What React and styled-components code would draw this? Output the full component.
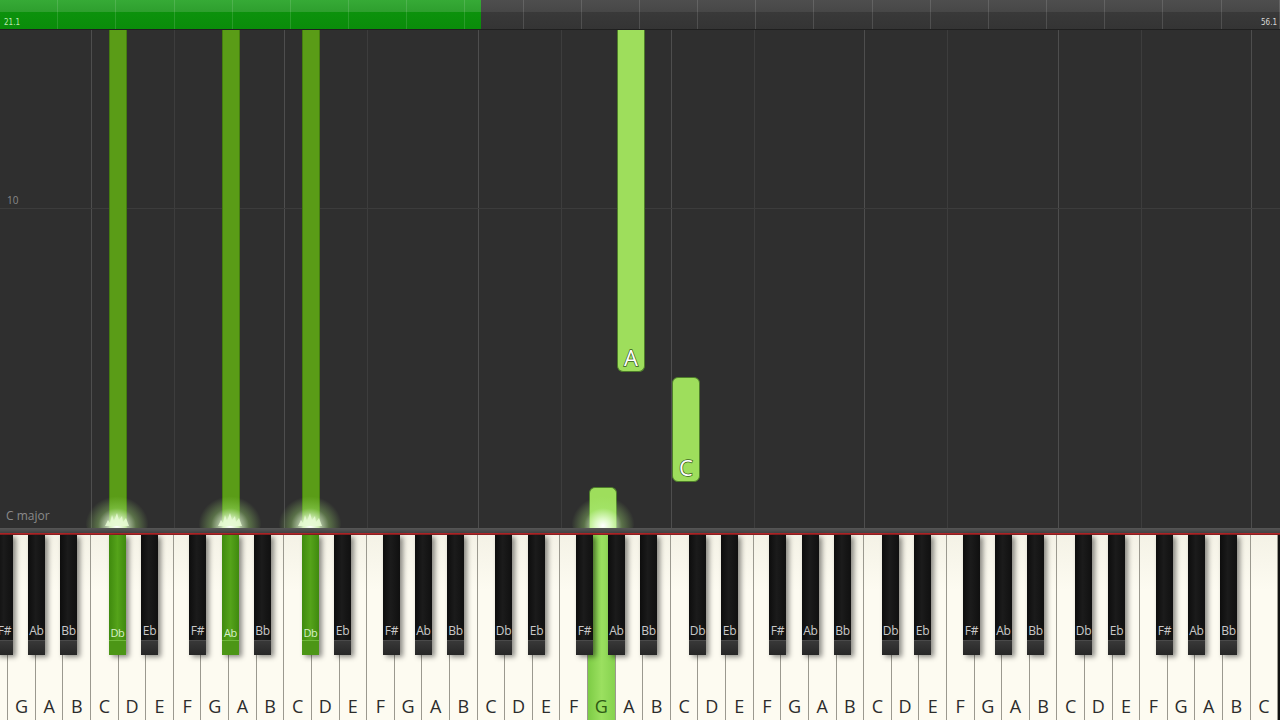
import React from 'react';
import styled, { createGlobalStyle } from 'styled-components';

const W = 27.62; // white key width
const OCT = W * 7;
const FIRST = -19.4; // left edge of the partly hidden F
const WHITE_NAMES = ['F', 'G', 'A', 'B', 'C', 'D', 'E'];
const BLACKS = [
	{ i: 1, name: 'Db' },
	{ i: 3, name: 'Eb' },
	{ i: 6, name: 'F#' },
	{ i: 8, name: 'Ab' },
	{ i: 10, name: 'Bb' },
];
const PROGRESS = 481;

const GlobalStyle = createGlobalStyle`
	html, body {
		margin: 0;
		padding: 0;
		background: #2f2f2f;
		overflow: hidden;
	}
	body {
		font-family: "Open Sans", "Noto Sans", sans-serif;
	}
`;

const Screen = styled.div`
	width: 1280px;
	height: 720px;
	display: flex;
	flex-direction: column;
	overflow: hidden;
	background: #2f2f2f;
`;

const TopBar = styled.div`
	position: relative;
	height: 29px;
	flex: 0 0 29px;
	display: flex;
	border-bottom: 1px solid #1f1f1f;
	background:
		linear-gradient(#36aa36 0, #2e9f2e 12px, #0c920c 12px, #0a8c0a 100%) 0 0 / ${PROGRESS}px 100% no-repeat,
		linear-gradient(#4e4e4e 0, #474747 12px, #393939 12px, #343434 100%);
`;

const Tick = styled.div`
	flex: 0 0 ${1280 / 22}px;
	box-sizing: border-box;
	border-right: 1px solid rgba(255, 255, 255, 0.13);
`;

const BarLabel = styled.span`
	position: absolute;
	bottom: 2px;
	${(p) => (p.right ? 'right: 3px;' : 'left: 4px;')}
	font-family: "DejaVu Sans Condensed", "DejaVu Sans", sans-serif;
	font-size: 8px;
	color: ${(p) => (p.right ? '#d8d8d8' : '#b8e8b0')};
`;

const Roll = styled.div`
	position: relative;
	height: 498px;
	flex: 0 0 498px;
	overflow: hidden;
	background: #2f2f2f;
`;

const Lanes = styled.div`
	display: flex;
	height: 100%;
`;

const Lane = styled.div`
	flex: 0 0 ${(p) => p.w}px;
	box-sizing: border-box;
	border-left: 1px solid ${(p) => (p.edge === 'C' ? '#4e4e4e' : p.edge === 'F' ? '#3d3d3d' : 'transparent')};
`;

const BeatLine = styled.div`
	position: absolute;
	left: 0;
	right: 0;
	top: ${(p) => p.y}px;
	height: 1px;
	background: #3c3c3c;
`;

const RollLabel = styled.span`
	position: absolute;
	left: ${(p) => p.x}px;
	top: ${(p) => p.y}px;
	font-size: ${(p) => p.size}px;
	color: #8a8a8a;
`;

const Note = styled.div`
	position: absolute;
	box-sizing: border-box;
	display: flex;
	align-items: flex-end;
	justify-content: center;
	background: ${(p) => (p.black ? '#5a9c17' : '#9ede5c')};
	border: 1px solid ${(p) => (p.black ? '#447c10' : '#4d7d2a')};
	border-radius: ${(p) => (p.black ? '1px' : '6px')};
	${(p) => p.open && 'border-bottom: none; border-bottom-left-radius: 0; border-bottom-right-radius: 0;'}
	${(p) => p.fromTop && 'border-top: none; border-top-left-radius: 0; border-top-right-radius: 0;'}
`;

const NoteName = styled.span`
	font-family: "Open Sans", "Noto Sans", sans-serif;
	font-size: 22px;
	line-height: 26px;
	color: #ffffff;
	-webkit-text-stroke: 1.4px #3b5e22;
	paint-order: stroke fill;
	margin-bottom: 1px;
`;

const Glow = styled.div`
	position: absolute;
	left: ${(p) => p.x - 32}px;
	top: ${(p) => p.y - 26}px;
	width: 64px;
	height: 48px;
	border-radius: 50%;
	background: radial-gradient(ellipse at 50% 62%, rgba(255, 255, 255, 1) 0, rgba(235, 255, 220, 0.85) 16%, rgba(170, 235, 120, 0.35) 42%, rgba(120, 200, 80, 0) 70%);
	pointer-events: none;
`;

const Spark = styled.svg`
	position: absolute;
	left: ${(p) => p.x - 13}px;
	top: ${(p) => p.y - 14}px;
	overflow: visible;
`;

const Keyboard = styled.div`
	position: relative;
	flex: 1;
	display: flex;
	flex-direction: column;
	overflow: hidden;
`;

const Rail = styled.div`
	height: 5px;
	background: linear-gradient(#565656, #424242);
`;

const RedLine = styled.div`
	height: 2px;
	background: linear-gradient(#c2282b, #7a1d1d);
`;

const Whites = styled.div`
	display: flex;
	flex: 1;
	margin-left: ${FIRST}px;
	background: #111;
`;

const WhiteKey = styled.div`
	flex: 0 0 ${W}px;
	box-sizing: border-box;
	border-right: 1px solid #9b998f;
	display: flex;
	align-items: flex-end;
	justify-content: center;
	padding-bottom: 2px;
	background: ${(p) => (p.on ? 'linear-gradient(90deg, #7dcc45, #9be060 50%, #86d24f)' : 'linear-gradient(#f4f2e6, #fdfbf1 30%, #fdfbf1)')};
	font-size: 18px;
	line-height: 24px;
	color: #2c2c2c;
	${(p) => p.on && 'color: #2e5a14;'}
`;

const BlackKey = styled.div`
	position: absolute;
	top: 7px;
	left: ${(p) => p.x}px;
	width: 17px;
	height: 120px;
	box-sizing: border-box;
	display: flex;
	flex-direction: column;
	justify-content: flex-end;
	background: ${(p) => (p.on ? 'linear-gradient(90deg, #3f8a0e, #55a31a 50%, #3f8a0e)' : 'linear-gradient(90deg, #0d0d0d, #1b1b1b 45%, #101010)')};
	box-shadow: 3px 2px 5px rgba(0, 0, 0, 0.45);
`;

const BlackName = styled.span`
	text-align: center;
	font-size: ${(p) => (p.on ? 11 : 12)}px;
	line-height: 14px;
	color: ${(p) => (p.on ? '#d8efc8' : '#c9c9c9')};
	margin-bottom: ${(p) => (p.on ? 0 : 2)}px;
	letter-spacing: -0.3px;
`;

const Lip = styled.div`
	height: 14px;
	border-top: 1px solid ${(p) => (p.on ? '#6fb83a' : '#4a4a4a')};
	background: ${(p) => (p.on ? '#4c9616' : 'linear-gradient(#383838, #262626)')};
`;

// pieces of the roll
const lanes = (() => {
	const out = [{ w: 91.1, edge: null }];
	let x = 91.1;
	let c = true;
	while (x < 1280) {
		const w = c ? W * 3 : W * 4;
		out.push({ w, edge: c ? 'C' : 'F' });
		x += w;
		c = !c;
	}
	return out;
})();

// the first key (F) is mostly hidden, its name sits off screen
const whites = Array.from({ length: 47 }, (_, k) => ({
	name: k === 0 ? '' : WHITE_NAMES[k % 7],
	on: k === 22,
}));

const blacks = (() => {
	const out = [];
	for (let o = -1; o < 7; o++) {
		const cStart = FIRST + (4 + o * 7) * W;
		BLACKS.forEach((b) => {
			const center = cStart + ((b.i + 0.5) * OCT) / 12 + 2;
			if (center < -20 || center > 1255) return;
			const x = Math.round(center - 8.5);
			const on = (o === 0 && (b.name === 'Db' || b.name === 'Ab')) || (o === 1 && b.name === 'Db');
			out.push({ x, name: b.name, on });
		});
	}
	return out;
})();

const darkNotes = [109, 222, 302];

const Sparkle = ({ x, y }) => (
	<Spark x={x} y={y} width="26" height="14" viewBox="0 0 26 14">
		<path
			d="M1 14 L4 8 L6 11 L8 3 L10 9 L13 1 L15 8 L18 4 L19 10 L22 6 L25 14 Z"
			fill="#e6fad2"
			opacity="0.9"
		/>
	</Spark>
);

export default function App() {
	return (
		<Screen>
			<GlobalStyle />
			<TopBar>
				{Array.from({ length: 22 }, (_, i) => (
					<Tick key={i} />
				))}
				<BarLabel>21.1</BarLabel>
				<BarLabel right>56.1</BarLabel>
			</TopBar>

			<Roll>
				<Lanes>
					{lanes.map((l, i) => (
						<Lane key={i} w={l.w} edge={l.edge} />
					))}
				</Lanes>
				<BeatLine y={178} />
				<RollLabel x={7} y={163} size={10}>10</RollLabel>
				<RollLabel x={6} y={477} size={12}>C major</RollLabel>

				{darkNotes.map((x) => (
					<Note key={x} black open fromTop style={{ left: x, top: 0, width: 18, height: 498 }} />
				))}

				<Note fromTop style={{ left: 617, top: 0, width: 28, height: 342 }}>
					<NoteName>A</NoteName>
				</Note>
				<Note style={{ left: 672, top: 347, width: 28, height: 105 }}>
					<NoteName>C</NoteName>
				</Note>
				<Note open style={{ left: 589, top: 457, width: 28, height: 41 }} />

				{[117, 230, 310].map((x) => (
					<React.Fragment key={x}>
						<Glow x={x} y={492} />
						<Sparkle x={x} y={496} />
					</React.Fragment>
				))}
				<Glow x={603} y={492} />
			</Roll>

			<Keyboard>
				<Rail />
				<RedLine />
				<Whites>
					{whites.map((k, i) => (
						<WhiteKey key={i} on={k.on}>
							{k.name}
						</WhiteKey>
					))}
				</Whites>
				{blacks.map((b, i) => (
					<BlackKey key={i} x={b.x} on={b.on}>
						<BlackName on={b.on}>{b.name}</BlackName>
						<Lip on={b.on} />
					</BlackKey>
				))}
			</Keyboard>
		</Screen>
	);
}
